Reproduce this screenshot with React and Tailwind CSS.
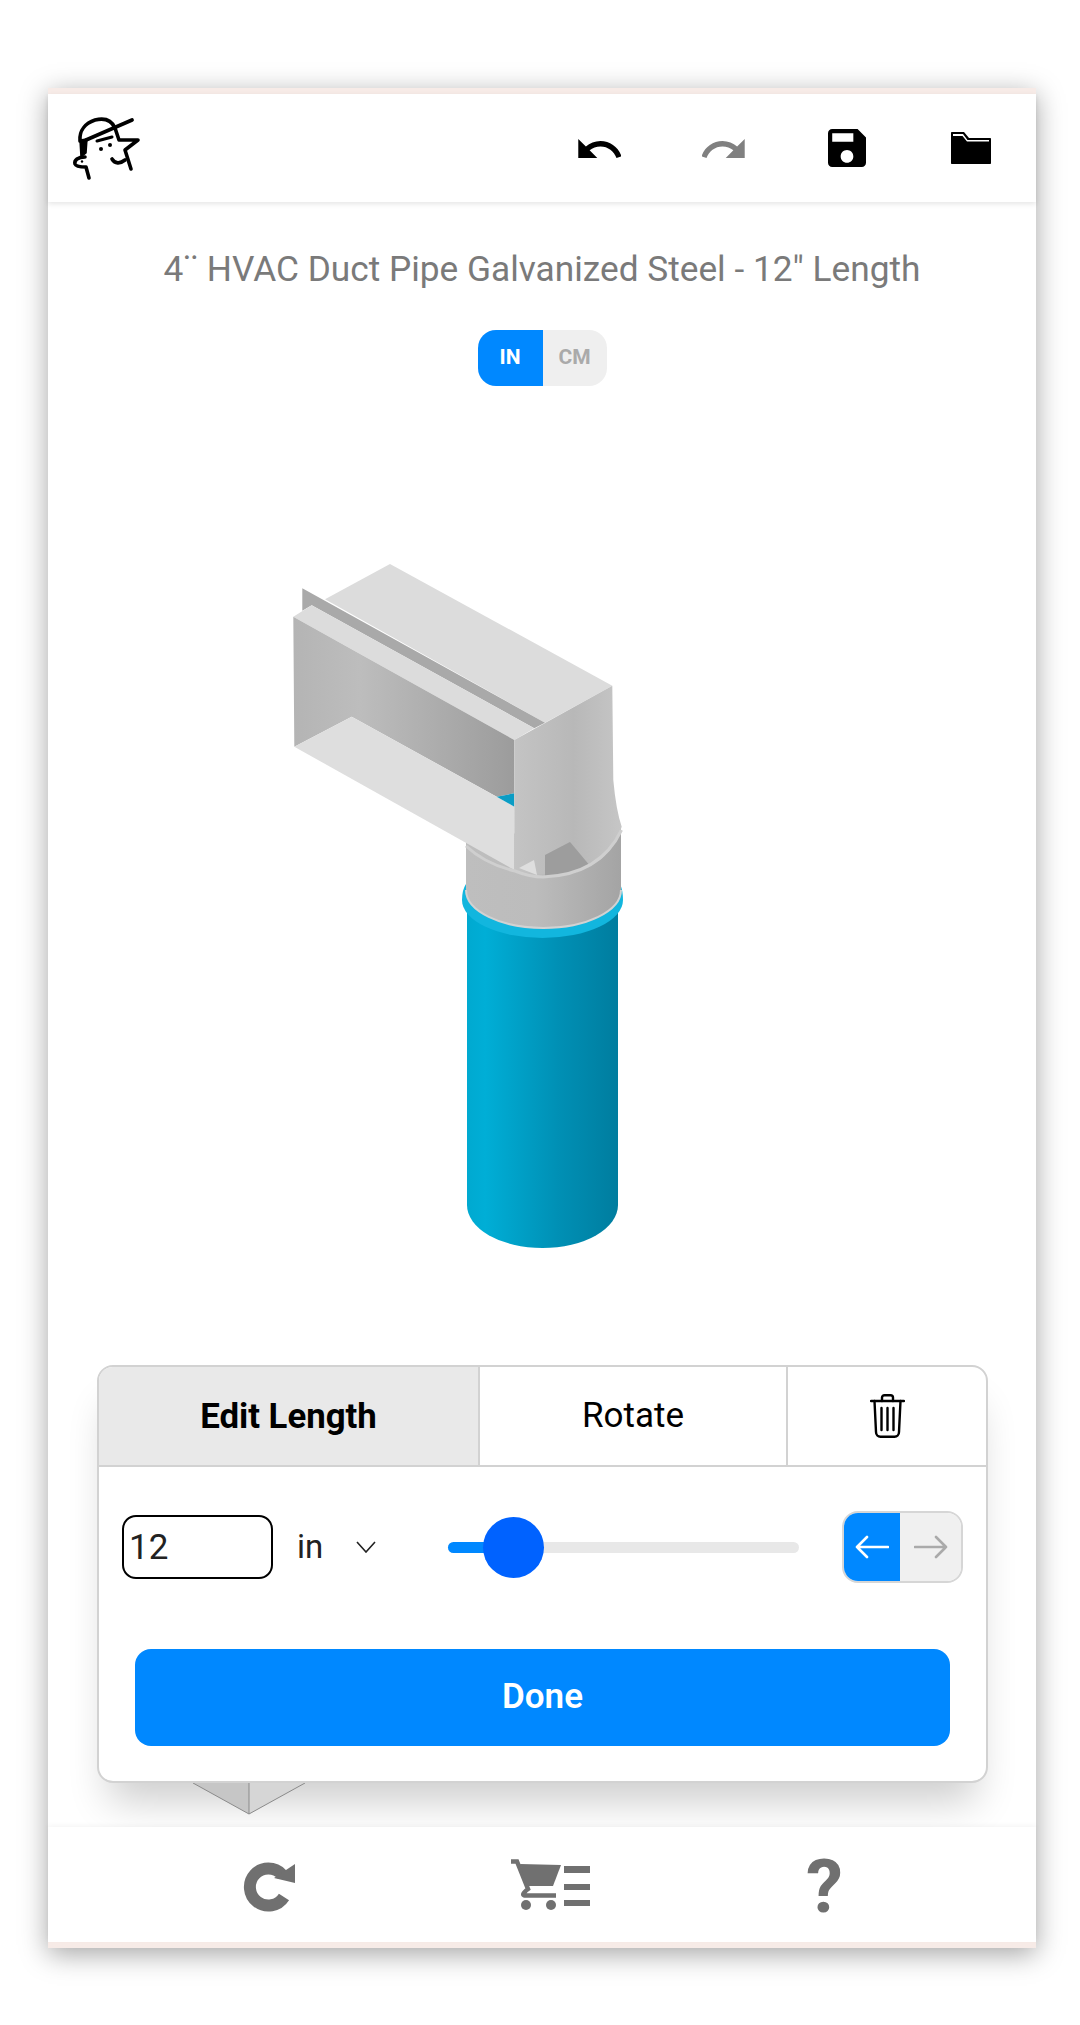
function Logo() {
  return (
    <svg width="100" height="80" viewBox="0 0 100 80" fill="none" stroke="#000" strokeWidth="3.6" strokeLinecap="round" strokeLinejoin="round">
      <path d="M20 34C19 23 26 16 35 13C43 11 51 12 55 21" />
      <path d="M72 13L26 33" strokeWidth="3.8" />
      <path d="M20 33L27 32L26 46L21 50Z" fill="#000" stroke="#000" strokeWidth="1.5" />
      <path d="M25 50C18 50 14 53 15 57C16 60 22 60 26 60L29 71" />
      <circle cx="22" cy="54.5" r="1.2" fill="#000" stroke="none" />
      <path d="M37 34L52 30" strokeWidth="3" />
      <circle cx="41" cy="42" r="2" fill="#000" stroke="none" />
      <circle cx="50" cy="38" r="2" fill="#000" stroke="none" />
      <path d="M55 21L59 33L78 33L65 43L71 62" />
      <path d="M52 52C55 57 60 57 65 53" />
    </svg>
  );
}

function Model() {
  return (
    <svg className="block" width="988" height="900" viewBox="48 400 988 900">
      <defs>
        <linearGradient id="body" x1="0" x2="1" y1="0" y2="0">
          <stop offset="0" stopColor="#00a9d0" />
          <stop offset="0.12" stopColor="#00aed6" />
          <stop offset="0.6" stopColor="#0090b5" />
          <stop offset="1" stopColor="#007d9f" />
        </linearGradient>
        <linearGradient id="collar" x1="0" x2="1" y1="0" y2="0">
          <stop offset="0" stopColor="#bebebe" />
          <stop offset="0.45" stopColor="#bcbcbc" />
          <stop offset="1" stopColor="#a4a4a4" />
        </linearGradient>
        <linearGradient id="wall" x1="0" x2="1" y1="0" y2="0">
          <stop offset="0" stopColor="#b4b4b4" />
          <stop offset="0.3" stopColor="#bdbdbd" />
          <stop offset="1" stopColor="#9c9c9c" />
        </linearGradient>
        <linearGradient id="front" x1="0" x2="1" y1="0" y2="0">
          <stop offset="0" stopColor="#c4c4c4" />
          <stop offset="0.55" stopColor="#b8b8b8" />
          <stop offset="1" stopColor="#c6c6c6" />
        </linearGradient>
      </defs>
      <path d="M467 900L467 1205A75.5 43 0 0 0 618 1205L618 900Z" fill="url(#body)" />
      <path d="M466 884Q462 890 462 900A80.5 38 0 0 0 623 900Q623 890 620 884Z" fill="#12b6de" />
      <path d="M466 836L621 828L621 890A77.5 38 0 0 1 466 890Z" fill="url(#collar)" />
      <path d="M466 890A77.5 38 0 0 0 621 890" fill="none" stroke="#d2d2d2" strokeWidth="2" />
      <polygon points="325,599.3 390,564 612.3,685.7 545,722.7" fill="#dcdcdc" />
      <polygon points="302.3,588.3 545,722.7 534.3,728.3 311.7,605.3 302.3,610.7" fill="#a9a9a9" />
      <polygon points="293.3,616.7 311.7,605.3 534.3,728.3 514.3,740" fill="#dcdcdc" />
      <polygon points="293.3,616.7 514.3,740 514.3,793.3 496.7,796.7 351.7,716.7 294.3,746.7" fill="url(#wall)" />
      <polygon points="294.3,746.7 351.7,716.7 496.7,796.7 514.3,806.7 514.3,870" fill="#dedede" />
      <polygon points="496.7,796.7 514.3,793.3 514.3,806.7" fill="#0a9cc4" />
      <path d="M514.3 740L612.3 685.7L613.3 780Q616 810 621.7 826.7Q612 856 590 866L570 842L545 855L545 874L535 875L514.3 870Z" fill="url(#front)" />
      <polygon points="545,855 570,842 590,866 575,873 545,877" fill="#9d9d9d" />
      <polygon points="519,868 534,860 537,875" fill="#dedede" />
      <path d="M466 846Q485 864 515 871Q530 877 543 877Q600 875 621.5 830" fill="none" stroke="#cfcfcf" strokeWidth="3" />
    </svg>
  );
}

export default function App() {
  return (
    <div className="w-[1080px] h-[2025px] pt-[88px] pl-[48px] bg-white [font-family:Roboto,sans-serif]">
      <div className="w-[988px] h-[1860px] flex flex-col bg-white border-t-[6px] border-b-[6px] border-[#f7ebe7] shadow-[0_6px_26px_rgba(0,0,0,0.36)]">
        <header className="relative z-10 h-[108px] shrink-0 flex items-center justify-between bg-white shadow-[0_2px_5px_rgba(0,0,0,0.1)]">
          <div className="ml-[12px] -mt-[2px] flex items-center"><Logo /></div>
          <div className="flex items-center mr-[3px]">
            <div className="w-[124px] flex justify-center">
              <svg width="43" height="19" viewBox="2 7 20.1 9"><path fill="#000" d="M12.5 8c-2.65 0-5.05.99-6.9 2.6L2 7v9h9l-3.62-3.62c1.39-1.16 3.16-1.88 5.12-1.88 3.54 0 6.55 2.31 7.6 5.5l2.37-.78C21.08 11.03 17.15 8 12.5 8z" /></svg>
            </div>
            <div className="w-[124px] flex justify-center">
              <svg width="43" height="19" viewBox="1.9 7 20.1 9"><path fill="#808080" d="M18.4 10.6C16.55 8.99 14.15 8 11.5 8c-4.65 0-8.58 3.03-9.96 7.22L3.9 16c1.05-3.19 4.05-5.5 7.6-5.5 1.95 0 3.73.72 5.12 1.88L13 16h9V7l-3.6 3.6z" /></svg>
            </div>
            <div className="w-[124px] flex justify-center">
              <svg width="38" height="38" viewBox="3 3 18 18"><path fill="#000" d="M17 3H5c-1.11 0-2 .9-2 2v14c0 1.1.89 2 2 2h14c1.1 0 2-.9 2-2V7l-4-4zm-5 16c-1.66 0-3-1.34-3-3s1.34-3 3-3 3 1.34 3 3-1.34 3-3 3zm3-10H5V5h10v4z" /></svg>
            </div>
            <div className="w-[124px] flex justify-center">
              <svg width="40" height="32" viewBox="0 0 40 32"><path fill="#000" d="M1 0H13L18 6H39C39.6 6 40 6.4 40 7V31C40 31.6 39.6 32 39 32H1C.4 32 0 31.6 0 31V1C0 .4.4 0 1 0Z" /><path fill="#fff" d="M2 2H12L16.5 8H38V9.5H16L11.5 4H2Z" /></svg>
            </div>
          </div>
        </header>

        <main className="flex-1 flex flex-col min-h-0">
          <h1 className="mt-[41px] h-[52px] flex items-center justify-center text-[35.25px] font-normal text-[#7a7a7a]">4¨ HVAC Duct Pipe Galvanized Steel - 12" Length</h1>
          <div className="mt-[35px] mx-auto w-[129px] h-[56px] flex rounded-[18px] overflow-hidden text-[21px] font-bold">
            <div className="w-[65px] flex items-center justify-center bg-[#0088ff] text-white">IN</div>
            <div className="flex-1 flex items-center justify-center bg-[#efefef] text-[#aaaaaa]">CM</div>
          </div>
          <div className="mt-[14px] h-[900px]"><Model /></div>

          <section className="mt-[65px] ml-[49px] mr-[48px] h-[418px] shrink-0 flex flex-col bg-white border-2 border-[#d2d2d2] rounded-[16px] shadow-[0_30px_40px_-12px_rgba(0,0,0,0.2)]">
            <div className="h-[100px] shrink-0 flex border-b-2 border-[#d2d2d2]">
              <div className="w-[379px] flex items-center justify-center bg-[#e9e9e9] rounded-tl-[14px] text-[34.8px] font-bold text-black">Edit Length</div>
              <div className="w-[308px] flex items-center justify-center border-l-2 border-[#d2d2d2] text-[35px] text-black">Rotate</div>
              <div className="flex-1 flex items-center justify-center border-l-2 border-[#d2d2d2]">
                <svg width="35" height="44" viewBox="0 0 35 44" fill="none" stroke="#000" strokeWidth="2.4" strokeLinecap="round">
                  <path d="M1 7H34" />
                  <path d="M12 7V3.5C12 2 13 1.2 14.5 1.2H20.5C22 1.2 23 2 23 3.5V7" />
                  <path d="M4.5 7L6 38C6 41 8 42.8 10.5 42.8H24.5C27 42.8 29 41 29 38L30.5 7" />
                  <path d="M11.5 14V36M17.5 14V36M23.5 14V36" />
                </svg>
              </div>
            </div>

            <div className="mt-[45px] ml-[23px] h-[70px] flex items-center text-[33px] text-[#222222]">
              <input readOnly value="12" className="w-[151px] h-[64px] pl-[5px] border-2 border-black rounded-[14px] outline-none bg-white text-[35px]" />
              <span className="ml-[24px]">in</span>
              <svg className="ml-[33px]" width="20" height="12" viewBox="0 0 20 12" fill="none" stroke="#222" strokeWidth="1.6"><path d="M1 1L10 11L19 1" /></svg>
              <div className="relative ml-[72px] w-[351px] h-[11px] rounded-full bg-[#e8e8e8]">
                <div className="absolute left-0 top-0 h-[11px] w-[50px] rounded-l-full bg-[#0088ff]" />
                <div className="absolute left-[35px] top-[-25px] w-[61px] h-[61px] rounded-full bg-[#0062ff]" />
              </div>
              <div className="ml-[43px] w-[121px] h-[72px] shrink-0 flex rounded-[16px] overflow-hidden border-2 border-[#d6d6d6]">
                <div className="w-[56px] flex items-center justify-center bg-[#0088ff]">
                  <svg width="34" height="24" viewBox="0 0 34 24" fill="none" stroke="#fff" strokeWidth="2.6" strokeLinecap="round" strokeLinejoin="round"><path d="M33 12H2M12 2L2 12L12 22" /></svg>
                </div>
                <div className="flex-1 flex items-center justify-center bg-[#f0f0f0]">
                  <svg width="34" height="24" viewBox="0 0 34 24" fill="none" stroke="#aaaaaa" strokeWidth="2.6" strokeLinecap="round" strokeLinejoin="round"><path d="M1 12H32M22 2L32 12L22 22" /></svg>
                </div>
              </div>
            </div>

            <button className="mt-[67px] ml-[36px] mr-[36px] h-[97px] shrink-0 rounded-[16px] bg-[#0088ff] text-white text-[35px] font-semibold">Done</button>
          </section>

          <div className="relative flex-1">
            <svg className="absolute left-[145px] top-0" width="112" height="32" viewBox="0 0 112 32">
              <polygon points="0,0 56,31 56,0" fill="#c6c6c6" />
              <polygon points="56,0 56,31 112,0" fill="#d6d6d6" />
              <path d="M0 0L56 31L112 0M56 0V31" fill="none" stroke="#8a8a8a" strokeWidth="1" />
            </svg>
          </div>
        </main>

        <footer className="relative h-[115px] shrink-0 flex items-center pl-[197px] bg-white shadow-[0_-2px_5px_rgba(0,0,0,0.04)]">
          <svg width="70" height="70" viewBox="0 0 70 70" className="-ml-[10px]">
            <path d="M49 47A18.5 18.5 0 1 1 47 24.5" fill="none" stroke="#707070" strokeWidth="12" />
            <polygon points="60,14 60,33 39,28" fill="#707070" />
          </svg>
          <svg width="100" height="70" viewBox="0 0 100 70" className="ml-[195px]">
            <path d="M11 11.5H17L28 39Q19 46 27 45.5H56" fill="none" stroke="#707070" strokeWidth="4.5" />
            <polygon points="20,14 61,15 53,36 27,36" fill="#707070" />
            <circle cx="26" cy="55" r="5" fill="#707070" />
            <circle cx="51" cy="55" r="5" fill="#707070" />
            <rect x="64" y="16" width="26" height="7" fill="#707070" />
            <rect x="64" y="34" width="26" height="6" fill="#707070" />
            <rect x="64" y="50" width="26" height="6" fill="#707070" />
          </svg>
          <span className="ml-[208px] mt-[4px] w-[33px] flex justify-center text-[74px] font-bold leading-none text-[#707070]">?</span>
        </footer>
      </div>
    </div>
  );
}
